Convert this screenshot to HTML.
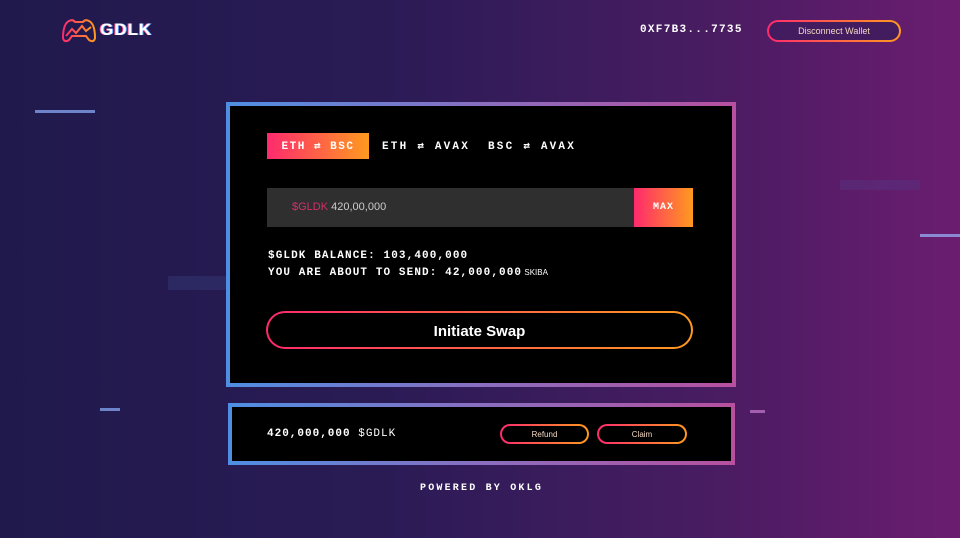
<!DOCTYPE html>
<html><head><meta charset="utf-8"><style>
*{margin:0;padding:0;box-sizing:border-box}
body{width:960px;height:542px;overflow:hidden;font-family:"Liberation Mono",monospace;color:#fff;
background:linear-gradient(90deg,#201a4c 0%,#2a1b55 40%,#4a1c62 75%,#6b1d6f 100%);position:relative}
.abs{position:absolute}
.pix{font-family:"Liberation Mono",monospace;font-weight:bold;letter-spacing:1px}
.gb{background:linear-gradient(90deg,#4e8fe3,#8a6ec0 50%,#b7509f)}
.pill{position:absolute;border-radius:20px;background:linear-gradient(90deg,#ff2a6d,#ff9a1f);padding:2px}
.pill>div{width:100%;height:100%;border-radius:18px;background:#000;display:flex;align-items:center;justify-content:center;font-family:"Liberation Sans",sans-serif;color:#f3d6c0}
.gl{position:absolute;height:4px;background:#3a3574;opacity:.7}
</style></head><body>
<div class="gl" style="left:35px;top:110px;width:60px;background:#8fb2ff;height:3px"></div>
<div class="gl" style="left:168px;top:276px;width:60px;height:14px;background:#2f2e6a"></div>
<div class="gl" style="left:920px;top:234px;width:40px;height:3px;background:#9ab8ff"></div>
<div class="gl" style="left:840px;top:180px;width:80px;height:10px;background:#5a2c7a"></div>
<div class="gl" style="left:100px;top:408px;width:20px;height:3px;background:#8fb2ff"></div>
<div class="gl" style="left:750px;top:410px;width:15px;height:3px;background:#c87ad0"></div>
<svg class="abs" style="left:61px;top:18px" width="36" height="26" viewBox="0 0 36 26"><defs><linearGradient id="lg" x1="0" x2="1"><stop offset="0" stop-color="#ff2a6d"/><stop offset="1" stop-color="#ff9a1f"/></linearGradient></defs><path d="M8 3 Q12 1 14 4 L22 4 Q24 1 28 3 Q34 6 34 20 Q33 25 28 22 L25 18 L11 18 L8 22 Q3 25 2 20 Q2 6 8 3Z" fill="none" stroke="url(#lg)" stroke-width="2"/><path d="M5 18 L11 11 L15 15 L21 8 L25 13 L30 9" fill="none" stroke="url(#lg)" stroke-width="2"/></svg>
<div class="abs pix" style="left:100px;top:20px;font-size:17px;font-family:'Liberation Sans',sans-serif;font-weight:900;text-shadow:1px 0 #5aa0ff,-1px 0 #ff4a8d">GDLK</div>
<div class="abs pix" style="left:640px;top:24px;font-size:11px;letter-spacing:1.3px">0XF7B3...7735</div>
<div class="pill" style="left:767px;top:20px;width:134px;height:22px"><div style="font-size:9px;background:#431c60">Disconnect Wallet</div></div>

<div class="abs gb" style="left:226px;top:102px;width:510px;height:285px;padding:4px"><div style="width:100%;height:100%;background:#000"></div></div>
<div class="abs pix" style="left:267px;top:133px;width:102px;height:26px;background:linear-gradient(90deg,#ff2a6d,#ff9a1f);font-size:11px;display:flex;align-items:center;justify-content:center;letter-spacing:1.5px">ETH ⇄ BSC</div>
<div class="abs pix" style="left:382px;top:139px;font-size:11px;letter-spacing:2.2px">ETH ⇄ AVAX</div>
<div class="abs pix" style="left:488px;top:139px;font-size:11px;letter-spacing:2.2px">BSC ⇄ AVAX</div>
<div class="abs" style="left:267px;top:188px;width:368px;height:39px;background:#2f2f2f;font-family:'Liberation Sans',sans-serif;font-size:11px;padding:13px 0 0 25px;color:#ccc"><span style="color:#d0306a">$GLDK</span> 420,00,000</div>
<div class="abs pix" style="left:634px;top:188px;width:59px;height:39px;background:linear-gradient(90deg,#ff2a6d,#ff9a1f);font-size:10px;display:flex;align-items:center;justify-content:center">MAX</div>
<div class="abs pix" style="left:268px;top:250px;font-size:11px;letter-spacing:1.1px">$GLDK BALANCE: 103,400,000</div>
<div class="abs pix" style="left:268px;top:267px;font-size:11px;letter-spacing:1.1px">YOU ARE ABOUT TO SEND: 42,000,000<span style="font-family:'Liberation Sans';font-size:8px;letter-spacing:0;font-weight:normal"> SKIBA</span></div>
<div class="pill" style="left:266px;top:311px;width:427px;height:38px"><div style="font-size:15px;font-weight:bold;color:#fff;padding-top:3px">Initiate Swap</div></div>

<div class="abs gb" style="left:228px;top:403px;width:507px;height:62px;padding:4px"><div style="width:100%;height:100%;background:#000"></div></div>
<div class="abs pix" style="left:267px;top:428px;font-size:11px">420,000,000 <span style="font-weight:normal">$GDLK</span></div>
<div class="pill" style="left:500px;top:424px;width:89px;height:20px"><div style="font-size:8px">Refund</div></div>
<div class="pill" style="left:597px;top:424px;width:90px;height:20px"><div style="font-size:8px">Claim</div></div>
<div class="abs pix" style="left:420px;top:483px;font-size:10px;letter-spacing:2.2px">POWERED BY OKLG</div>
<div class="abs" style="left:0;top:538px;width:960px;height:4px;background:#fff"></div>
</body></html>
